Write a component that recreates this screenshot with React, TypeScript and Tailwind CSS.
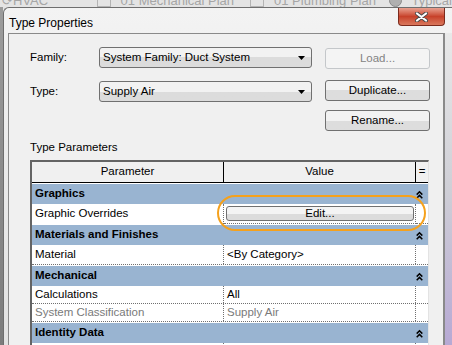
import React from 'react'

const ui = "font-['Liberation_Sans',Arial,sans-serif] text-[11.5px] text-black"

function Collapse() {
  return (
    <svg width="7" height="9" viewBox="0 0 7 9" className="block">
      <path d="M0.7 4.6 L3.5 1.8 L6.3 4.6 M0.7 8.2 L3.5 5.4 L6.3 8.2" fill="none" stroke="#000" strokeWidth="1.5" />
    </svg>
  )
}

function DropArrow() {
  return (
    <svg width="7" height="4" viewBox="0 0 7 4" className="block">
      <path d="M0 0 H7 L3.5 4 Z" fill="#000" />
    </svg>
  )
}

function Combo({ text }: { text: string }) {
  return (
    <div className="flex h-[21px] w-[213px] items-center justify-between rounded-[3px] border border-[#707070] bg-gradient-to-b from-[#f2f2f2] from-50% to-[#dcdcdc] to-50% pl-[3px] pr-[6px]">
      <span>{text}</span>
      <DropArrow />
    </div>
  )
}

function Btn({ label, disabled = false }: { label: string; disabled?: boolean }) {
  if (disabled) {
    return (
      <div className="flex h-[21px] w-[105px] items-center justify-center rounded-[3px] border border-[#c4c7ca] bg-[#f4f4f4] text-[#838383]">
        {label}
      </div>
    )
  }
  return (
    <div className="flex h-[21px] w-[105px] items-center justify-center rounded-[3px] border border-[#707070] bg-gradient-to-b from-[#f2f2f2] from-50% to-[#dddddd] to-50%">
      {label}
    </div>
  )
}

function Group({ name }: { name: string }) {
  return (
    <div className="flex h-[21px] items-center border-t border-white bg-[#99b4d1]">
      <div className="flex-1 pl-[3px] font-bold">{name}</div>
      <div className="w-[13px] pl-[1px]">
        <Collapse />
      </div>
    </div>
  )
}

function Row({ name, value, h, dim = false }: { name: string; value: string; h: string; dim?: boolean }) {
  return (
    <div className={`flex ${h} bg-white border-b border-dotted border-[#707070] ${dim ? 'text-[#7a7a7a]' : ''}`}>
      <div className="flex w-[192px] items-center border-r border-dotted border-[#707070] pl-[3px]">{name}</div>
      <div className="flex w-[192px] items-center border-r border-dotted border-[#707070] pl-[3px]">{value}</div>
      <div className="flex-1" />
    </div>
  )
}

export default function App() {
  return (
    <div className={`relative flex h-[345px] w-[452px] flex-col overflow-hidden bg-[#e4e4e4] ${ui}`}>
      {/* tabs of the view behind, mostly hidden */}
      <div className="h-[7px] overflow-hidden text-[13px] text-[#a6a6a6]">
        <div className="-mt-[9px] flex items-center whitespace-nowrap">
          <span className="ml-[2px] w-[95px]">⟳HVAC</span>
          <span className="h-[12px] w-[14px] border border-[#b4b4b4]" />
          <span className="ml-[10px] w-[130px]">01 Mechanical Plan</span>
          <span className="h-[12px] w-[14px] border border-[#b4b4b4]" />
          <span className="ml-[10px] w-[115px]">01 Plumbing Plan</span>
          <span className="h-[13px] w-[13px] rounded-full border border-[#8a8a8a] bg-[#b0b0b0]" />
          <span className="ml-[10px]">Typical</span>
        </div>
      </div>

      <div className="flex flex-1 overflow-hidden">
        <div className="w-[3px] bg-gradient-to-b from-[#9c9c9c] to-[#7c7c7c]" />

        {/* window */}
        <div className="flex flex-1 flex-col overflow-hidden rounded-tl-[6px] border-l border-t border-[#6e6e6e] bg-gradient-to-b from-[#f3f3f3] to-[#e2e2e2]">
          <div className="flex h-[25px] shrink-0 items-start justify-between pl-[5px] pr-[7px]">
            <span className="mt-[6px] text-[12px]">Type Properties</span>
            <div className="flex h-[18px] w-[47px] items-center justify-center rounded-b-[4px] border border-t-0 border-[#7b2a1c] bg-gradient-to-b from-[#e8a08f] via-[#c7412a] to-[#d9775c]">
              <svg width="15" height="10" viewBox="0 0 15 10">
                <path d="M3 1.5 L12 8.5 M12 1.5 L3 8.5" stroke="#4a4a4a" strokeWidth="4" strokeLinecap="round" />
                <path d="M3 1.5 L12 8.5 M12 1.5 L3 8.5" stroke="#ffffff" strokeWidth="2.2" strokeLinecap="round" />
              </svg>
            </div>
          </div>

          <div className="flex flex-1 overflow-hidden">
            {/* client area */}
            <div className="ml-[4px] flex flex-1 flex-col overflow-hidden border-l border-r-2 border-t border-[#8a8a8a] bg-[#f0f0f0] pl-[21px] pr-[13px] pt-[13px]">
              <div className="flex items-start">
                <span className="flex h-[21px] w-[69px] items-center">Family:</span>
                <Combo text="System Family: Duct System" />
                <div className="ml-[13px] mt-[1px]">
                  <Btn label="Load..." disabled />
                </div>
              </div>
              <div className="mt-[11px] flex items-start">
                <span className="mt-[1px] flex h-[21px] w-[69px] items-center">Type:</span>
                <div className="mt-[1px]">
                  <Combo text="Supply Air" />
                </div>
                <div className="ml-[13px]">
                  <Btn label="Duplicate..." />
                </div>
              </div>
              <div className="mt-[8px] flex justify-end">
                <Btn label="Rename..." />
              </div>

              <div className="mt-[9px] h-[15px] leading-[15px]">Type Parameters</div>

              {/* parameters table */}
              <div className="mr-[1px] mt-[5px] flex flex-col border-l-2 border-r border-t-2 border-l-[#646464] border-r-[#e3e3e3] border-t-[#646464]">
                <div className="flex h-[21px] border-b border-black bg-[#f0f0f0]">
                  <div className="flex w-[192px] items-center justify-center border-r border-black">Parameter</div>
                  <div className="flex w-[192px] items-center justify-center border-r border-black">Value</div>
                  <div className="flex flex-1 items-center justify-center">=</div>
                </div>

                <Group name="Graphics" />
                <div className="flex h-[20px] bg-white">
                  <div className="flex w-[192px] items-center border-r border-dotted border-[#707070] pl-[3px]">Graphic Overrides</div>
                  <div className="flex w-[192px] items-center border-b border-r border-dotted border-[#707070] pb-[2px] pl-[2px] pr-[1px] pt-[2px]">
                    <div className="flex h-full w-full items-center justify-center rounded-[3px] border border-[#707070] bg-gradient-to-b from-[#f4f4f4] from-50% to-[#dcdcdc] to-50%">
                      Edit...
                    </div>
                  </div>
                  <div className="flex-1 border-b border-dotted border-[#707070]" />
                </div>

                <Group name="Materials and Finishes" />
                <Row name="Material" value="<By Category>" h="h-[20px]" />

                <Group name="Mechanical" />
                <Row name="Calculations" value="All" h="h-[18px]" />
                <Row name="System Classification" value="Supply Air" h="h-[18px]" dim />

                <Group name="Identity Data" />
                <Row name="Keynote" value="" h="h-[20px]" />
                <Row name="Model" value="" h="h-[20px]" />
              </div>
            </div>

            {/* right edge of the frame */}
            <div className="w-[7px] bg-gradient-to-b from-[#e9e9e9] via-[#cfcfd6] to-[#b7a9d4]" />
          </div>
        </div>
      </div>

      {/* orange callout round the Edit button */}
      <div className="pointer-events-none absolute left-[217px] top-[195px] h-[36px] w-[209px] rounded-full border-2 border-[#f5a11c]" />
    </div>
  )
}
